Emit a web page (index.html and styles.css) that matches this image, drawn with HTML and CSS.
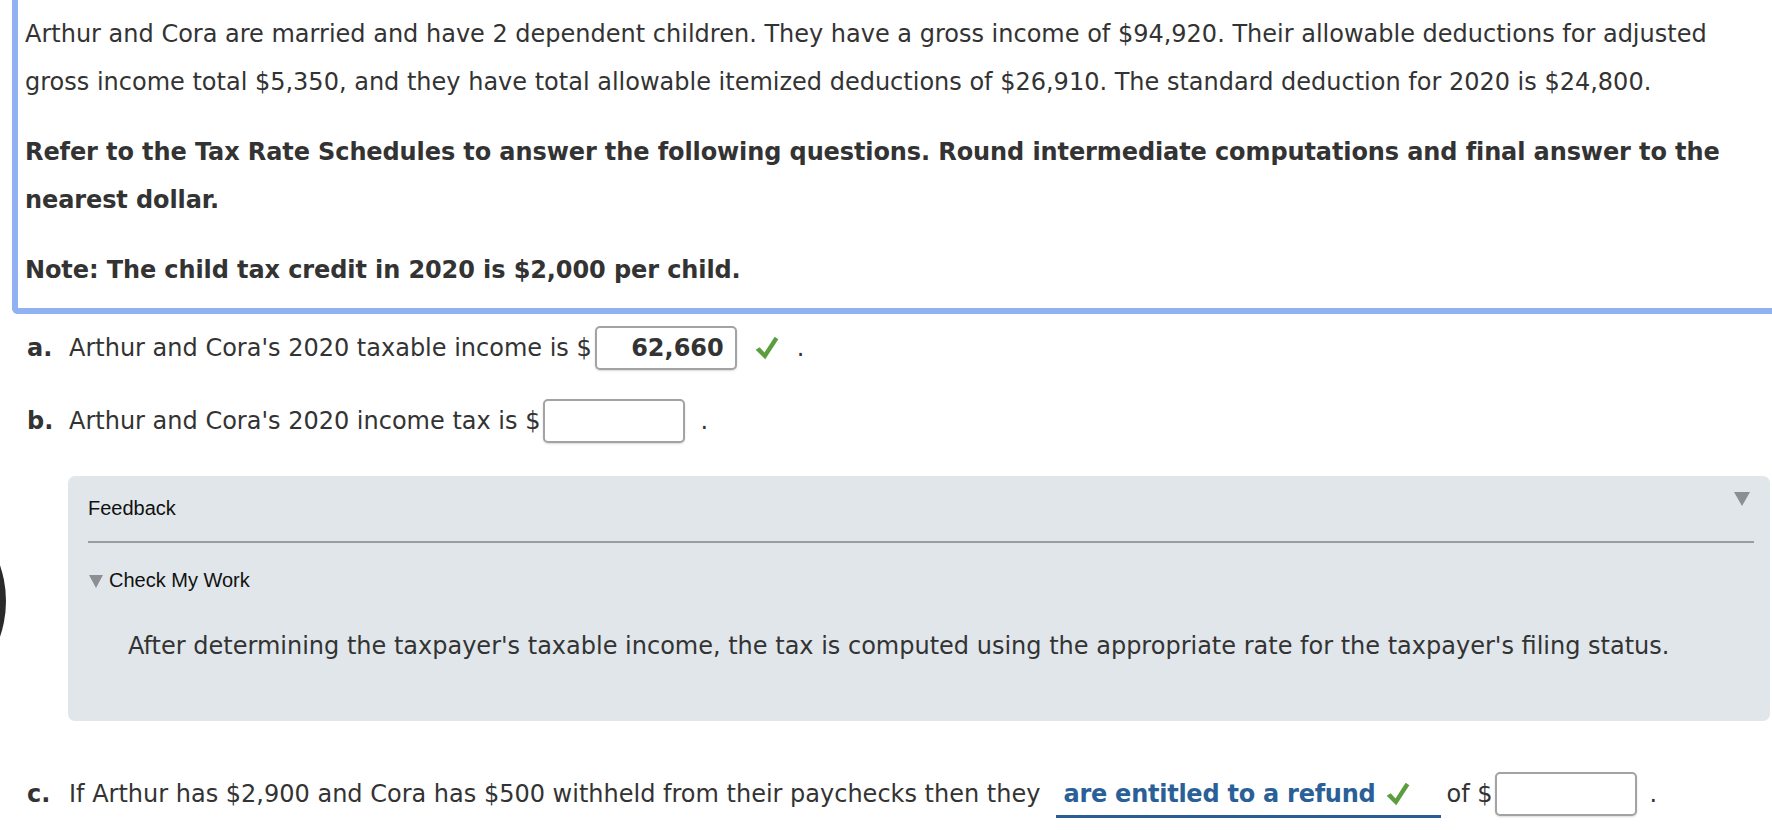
FILE: index.html
```html
<!DOCTYPE html>
<html lang="en">
<head>
<meta charset="utf-8">
<title>Tax problem</title>
<link rel="stylesheet" href="styles.css">
</head>
<body>
<div class="problem">
  <p>Arthur and Cora are married and have 2 dependent children. They have a gross income of $94,920. Their allowable deductions for adjusted gross income total $5,350, and they have total allowable itemized deductions of $26,910. The standard deduction for 2020 is $24,800.</p>
  <p class="strong">Refer to the Tax Rate Schedules to answer the following questions. Round intermediate computations and final answer to the nearest dollar.</p>
  <p class="strong">Note: The child tax credit in 2020 is $2,000 per child.</p>
</div>

<div class="parts">
  <div class="part part-a">
    <span class="label">a.</span>
    <span class="txt">Arthur and Cora's 2020 taxable income is $</span>
    <span class="input filled">62,660</span>
    <span class="check"><svg viewBox="0 0 22 22" width="24" height="24"><path d="M0.6 12.6 L4.3 10.2 L8.7 15.2 L18 0.6 L21.4 2.9 L9.4 21.4 Z" fill="#5c9e3f"/></svg></span>
    <span class="dot">.</span>
  </div>

  <div class="part part-b">
    <span class="label">b.</span>
    <span class="txt">Arthur and Cora's 2020 income tax is $</span>
    <span class="input"></span>
    <span class="dot">.</span>
  </div>

  <div class="feedback">
    <div class="fb-head">
      <span>Feedback</span>
      <span class="tri"></span>
    </div>
    <div class="cmw"><span class="tri small"></span><span>Check My Work</span></div>
    <p class="fb-text">After determining the taxpayer's taxable income, the tax is computed using the appropriate rate for the taxpayer's filing status.</p>
  </div>

  <div class="part part-c">
    <span class="label">c.</span>
    <span class="txt">If Arthur has $2,900 and Cora has $500 withheld from their paychecks then they</span>
    <span class="select"><span class="sel-text">are entitled to a refund</span><span class="check"><svg viewBox="0 0 22 22" width="24" height="24"><path d="M0.6 12.6 L4.3 10.2 L8.7 15.2 L18 0.6 L21.4 2.9 L9.4 21.4 Z" fill="#5c9e3f"/></svg></span></span>
    <span class="txt of">of $</span>
    <span class="input"></span>
    <span class="dot">.</span>
  </div>
</div>

<div class="bubble"></div>
</body>
</html>
```

FILE: styles.css
```css
* { box-sizing: border-box; }

html, body {
  margin: 0;
  background: #ffffff;
}

body {
  font-family: "DejaVu Sans", Verdana, sans-serif;
  font-size: 24px;
  color: #333333;
  overflow: hidden;
  position: relative;
  height: 830px;
}

.problem {
  margin-left: 12px;
  border-left: 6px solid #90b2f2;
  border-bottom: 6px solid #90b2f2;
  border-bottom-left-radius: 6px;
  padding: 10px 0 14px 7px;
}

.problem p {
  margin: 0;
  line-height: 48px;
}

.problem p + p {
  margin-top: 22px;
}

.problem .strong {
  font-weight: bold;
  letter-spacing: -0.1px;
}

.parts {
  padding-top: 12px;
}

.part {
  display: flex;
  align-items: center;
  height: 44px;
  margin-left: 27px;
  white-space: nowrap;
}

.part-b {
  margin-top: 29px;
}

.label {
  font-weight: bold;
  width: 42px;
  flex: none;
}

.input {
  display: inline-block;
  width: 142px;
  height: 44px;
  margin-left: 3px;
  border: 2px solid #a3a3a3;
  border-radius: 5px;
  background: #fff;
  box-shadow: 0 1px 2px rgba(0, 0, 0, 0.15);
  text-align: right;
  padding-right: 11px;
  line-height: 40px;
  font-weight: bold;
  color: #333;
}

.check {
  display: inline-flex;
  width: 25px;
  height: 24px;
  margin-left: 18px;
}

.part-a .dot { margin-left: 17px; }
.part-b .dot { margin-left: 15px; }
.part-c .dot { margin-left: 12px; }

.feedback {
  margin: 33px 2px 0 68px;
  background: #e0e6ea;
  border-radius: 7px;
  padding: 20px 16px 60px 20px;
  font-family: "Liberation Sans", Arial, Helvetica, sans-serif;
  color: #111;
}

.fb-head {
  display: flex;
  justify-content: space-between;
  align-items: center;
  font-size: 20px;
  line-height: 24px;
  padding-bottom: 21px;
  border-bottom: 2px solid #9a9c9e;
}

.tri {
  width: 0;
  height: 0;
  border-left: 8px solid transparent;
  border-right: 8px solid transparent;
  border-top: 14px solid #8b8e92;
  margin-right: 4px;
  margin-top: -18px;
}

.tri.small {
  border-left-width: 7px;
  border-right-width: 7px;
  border-top-width: 13px;
  margin: 2px 6px 0 1px;
}

.cmw {
  display: flex;
  align-items: center;
  margin-top: 25px;
  font-size: 20px;
  line-height: 24px;
}

.fb-text {
  margin: 39px 0 0 40px;
  font-family: "DejaVu Sans", Verdana, sans-serif;
  font-size: 24px;
  line-height: 30px;
  color: #333;
}

.part-c {
  margin-top: 51px;
}

.select {
  display: inline-flex;
  align-items: center;
  margin-left: 16px;
  padding: 0 30px 0 7px;
  height: 44px;
  border-bottom: 3px solid #2a5d94;
  margin-top: 3px;
}

.sel-text {
  color: #2a5f98;
  font-weight: bold;
  letter-spacing: -0.25px;
}

.select .check {
  margin-left: 11px;
}

.of {
  margin-left: 5px;
}

.bubble {
  position: absolute;
  left: -214px;
  top: 491px;
  width: 220px;
  height: 220px;
  border-radius: 50%;
  background: #2a2a2a;
}
```
